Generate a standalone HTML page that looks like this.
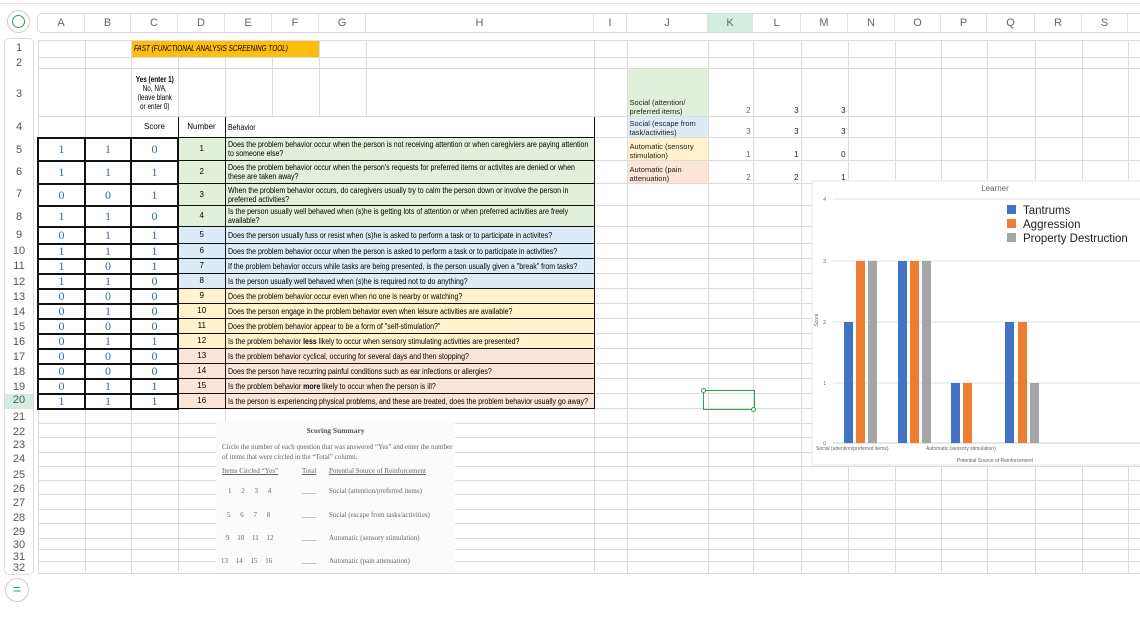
<!DOCTYPE html>
<html><head><meta charset="utf-8"><style>
*{margin:0;padding:0;box-sizing:border-box}
body{width:1140px;height:637px;background:#fff;position:relative;overflow:hidden;font-family:"Liberation Sans",sans-serif}
.abs{position:absolute}
#hdr{left:37px;top:13px;width:1103px;height:20px;border:1px solid #d8d8d8;border-right:none;border-radius:5px 0 0 5px;background:#fff}
.ch{position:absolute;top:0;height:18px;line-height:18px;text-align:center;color:#666;font-size:11px;border-right:1px solid #e0e0e0}
#rh{left:4px;top:38px;width:30px;height:537px;border:1px solid #ddd;border-radius:5px}
.rn{position:absolute;left:0;width:28px;text-align:center;color:#555;font-size:11px}
table{position:absolute;left:37px;top:40px;width:1103px;border-collapse:collapse;table-layout:fixed}
td{border:1px solid #dcdcdc;padding:0 2px;font-size:8px;line-height:10px;overflow:hidden;white-space:nowrap}
.n{font-family:"Liberation Serif",serif;color:#3a66a8;font-size:12px;line-height:12px;text-align:center;border:2px solid #111}
.d{text-align:center;border:1.5px solid #111;font-size:8px}
.b{border:1.5px solid #111;font-size:8px;line-height:9px}
.b>div{width:114%;transform:scaleX(0.875);transform-origin:left center;white-space:nowrap;overflow:hidden;max-height:18px}
.b.w>div{white-space:normal}
.g{background:#e2efda}.bl{background:#ddebf7}.y{background:#fff2cc}.p{background:#fce4d6}
.j{font-size:7.5px;line-height:9px;white-space:normal;vertical-align:bottom;color:#222}
.k{font-size:8px;text-align:right;vertical-align:bottom;color:#222}
.sq{display:block;width:125%;transform:scaleX(0.8);transform-origin:left center}
</style></head><body>
<div class="abs" style="left:0;top:3px;width:1140px;height:1px;background:#e4e4e4"></div>
<div class="abs" style="left:7px;top:10px;width:23px;height:23px;border:1px solid #ccc;border-radius:50%;"></div>
<div class="abs" style="left:12px;top:15px;width:13px;height:13px;border:1.5px solid #2fa05a;border-radius:50%;"></div>
<div id="hdr" class="abs">
<div class="ch" style="left:0;width:47px">A</div><div class="ch" style="left:47px;width:46px">B</div><div class="ch" style="left:93px;width:47px">C</div><div class="ch" style="left:140px;width:47px">D</div><div class="ch" style="left:187px;width:47px">E</div><div class="ch" style="left:234px;width:47px">F</div><div class="ch" style="left:281px;width:47px">G</div><div class="ch" style="left:328px;width:228px">H</div><div class="ch" style="left:556px;width:33px">I</div><div class="ch" style="left:589px;width:81px">J</div><div class="ch" style="left:670px;width:45px;background:#d3ede0">K</div><div class="ch" style="left:715px;width:48px">L</div><div class="ch" style="left:763px;width:47px">M</div><div class="ch" style="left:810px;width:47px">N</div><div class="ch" style="left:857px;width:46px">O</div><div class="ch" style="left:903px;width:46px">P</div><div class="ch" style="left:949px;width:48px">Q</div><div class="ch" style="left:997px;width:47px">R</div><div class="ch" style="left:1044px;width:46px">S</div>
</div>
<div id="rh" class="abs">
<div class="rn" style="top:3px">1</div><div class="rn" style="top:18px">2</div><div class="rn" style="top:49px">3</div><div class="rn" style="top:82px">4</div><div class="rn" style="top:105px">5</div><div class="rn" style="top:127px">6</div><div class="rn" style="top:149px">7</div><div class="rn" style="top:172px">8</div><div class="rn" style="top:190px">9</div><div class="rn" style="top:206px">10</div><div class="rn" style="top:221px">11</div><div class="rn" style="top:237px">12</div><div class="rn" style="top:252px">13</div><div class="rn" style="top:267px">14</div><div class="rn" style="top:282px">15</div><div class="rn" style="top:297px">16</div><div class="rn" style="top:312px">17</div><div class="rn" style="top:327px">18</div><div class="rn" style="top:342px">19</div><div class="rn" style="top:355px;background:#d3ede0;height:15px">20</div><div class="rn" style="top:372px">21</div><div class="rn" style="top:387px">22</div><div class="rn" style="top:400px">23</div><div class="rn" style="top:414px">24</div><div class="rn" style="top:430px">25</div><div class="rn" style="top:444px">26</div><div class="rn" style="top:458px">27</div><div class="rn" style="top:473px">28</div><div class="rn" style="top:487px">29</div><div class="rn" style="top:500px">30</div><div class="rn" style="top:512px">31</div><div class="rn" style="top:523px">32</div>
</div>
<div class="abs" style="left:5px;top:578px;width:24px;height:24px;border:1px solid #ccc;border-radius:50%;color:#2fa05a;font-size:14px;text-align:center;line-height:21px">=</div>

<table>
<colgroup><col style="width:47px"><col style="width:46px"><col style="width:47px"><col style="width:47px"><col style="width:47px"><col style="width:47px"><col style="width:47px"><col style="width:228px"><col style="width:33px"><col style="width:81px"><col style="width:45px"><col style="width:48px"><col style="width:47px"><col style="width:47px"><col style="width:46px"><col style="width:46px"><col style="width:48px"><col style="width:47px"><col style="width:46px"><col style="width:13px"></colgroup>
<tr style="height:17px"><td></td><td></td><td colspan="4" style="background:#fbbd0e;font-style:italic;font-size:8px"><span class="sq">FAST (FUNCTIONAL ANALYSIS SCREENING TOOL)</span></td><td></td><td></td><td></td><td></td><td></td><td></td><td></td><td></td><td></td><td></td><td></td><td></td><td></td><td></td></tr>
<tr style="height:11px"><td></td><td></td><td></td><td></td><td></td><td></td><td></td><td></td><td></td><td></td><td></td><td></td><td></td><td></td><td></td><td></td><td></td><td></td><td></td><td></td></tr>
<tr style="height:48px"><td></td><td></td><td style="text-align:center;font-size:8px;line-height:9px;padding:0"><div style="width:125%;margin-left:-12%;transform:scaleX(0.8)"><b>Yes (enter 1)</b><br>No, N/A,<br>(leave blank<br>or enter 0)</div></td><td></td><td></td><td></td><td></td><td></td><td></td><td class="j g">Social (attention/ preferred items)</td><td class="k" style="color:#666">2</td><td class="k">3</td><td class="k">3</td><td></td><td></td><td></td><td></td><td></td><td></td><td></td></tr>
<tr style="height:21px"><td></td><td></td><td class="d">Score</td><td class="d">Number</td><td class="b" colspan="4"><div>Behavior</div></td><td></td><td class="j bl">Social (escape from task/activities)</td><td class="k" style="color:#666">3</td><td class="k">3</td><td class="k">3</td><td></td><td></td><td></td><td></td><td></td><td></td><td></td></tr>
<tr style="height:23px"><td class="n">1</td><td class="n">1</td><td class="n">0</td><td class="d g">1</td><td class="b w g" colspan="4"><div>Does the problem behavior occur when the person is not receiving attention or when caregiviers are paying attention to someone else?</div></td><td></td><td class="j y">Automatic (sensory stimulation)</td><td class="k" style="color:#666">1</td><td class="k">1</td><td class="k">0</td><td></td><td></td><td></td><td></td><td></td><td></td><td></td></tr>
<tr style="height:23px"><td class="n">1</td><td class="n">1</td><td class="n">1</td><td class="d g">2</td><td class="b w g" colspan="4"><div>Does the problem behavior occur when the person's requests for preferred items or activites are denied or when these are taken away?</div></td><td></td><td class="j p">Automatic (pain attenuation)</td><td class="k" style="color:#666">2</td><td class="k">2</td><td class="k">1</td><td></td><td></td><td></td><td></td><td></td><td></td><td></td></tr>
<tr style="height:22px"><td class="n">0</td><td class="n">0</td><td class="n">1</td><td class="d g">3</td><td class="b w g" colspan="4"><div>When the problem behavior occurs, do caregivers usually try to calm the person down or involve the person in preferred activities?</div></td><td></td><td></td><td></td><td></td><td></td><td></td><td></td><td></td><td></td><td></td><td></td><td></td></tr>
<tr style="height:21px"><td class="n">1</td><td class="n">1</td><td class="n">0</td><td class="d g">4</td><td class="b w g" colspan="4"><div>Is the person usually well behaved when (s)he is getting lots of attention or when preferred activities are freely available?</div></td><td></td><td></td><td></td><td></td><td></td><td></td><td></td><td></td><td></td><td></td><td></td><td></td></tr>
<tr style="height:17px"><td class="n">0</td><td class="n">1</td><td class="n">1</td><td class="d bl">5</td><td class="b bl" colspan="4"><div>Does the person usually fuss or resist when (s)he is asked to perform a task or to participate in activites?</div></td><td></td><td></td><td></td><td></td><td></td><td></td><td></td><td></td><td></td><td></td><td></td><td></td></tr>
<tr style="height:15px"><td class="n">1</td><td class="n">1</td><td class="n">1</td><td class="d bl">6</td><td class="b bl" colspan="4"><div>Does the problem behavior occur when the person is asked to perform a task or to participate in activities?</div></td><td></td><td></td><td></td><td></td><td></td><td></td><td></td><td></td><td></td><td></td><td></td><td></td></tr>
<tr style="height:15px"><td class="n">1</td><td class="n">0</td><td class="n">1</td><td class="d bl">7</td><td class="b bl" colspan="4"><div>If the problem behavior occurs while tasks are being presented, is the person usually given a "break" from tasks?</div></td><td></td><td></td><td></td><td></td><td></td><td></td><td></td><td></td><td></td><td></td><td></td><td></td></tr>
<tr style="height:15px"><td class="n">1</td><td class="n">1</td><td class="n">0</td><td class="d bl">8</td><td class="b bl" colspan="4"><div>Is the person usually well behaved when (s)he is required not to do anything?</div></td><td></td><td></td><td></td><td></td><td></td><td></td><td></td><td></td><td></td><td></td><td></td><td></td></tr>
<tr style="height:15px"><td class="n">0</td><td class="n">0</td><td class="n">0</td><td class="d y">9</td><td class="b y" colspan="4"><div>Does the problem behavior occur even when no one is nearby or watching?</div></td><td></td><td></td><td></td><td></td><td></td><td></td><td></td><td></td><td></td><td></td><td></td><td></td></tr>
<tr style="height:15px"><td class="n">0</td><td class="n">1</td><td class="n">0</td><td class="d y">10</td><td class="b y" colspan="4"><div>Does the person engage in the problem behavior even when leisure activities are available?</div></td><td></td><td></td><td></td><td></td><td></td><td></td><td></td><td></td><td></td><td></td><td></td><td></td></tr>
<tr style="height:15px"><td class="n">0</td><td class="n">0</td><td class="n">0</td><td class="d y">11</td><td class="b y" colspan="4"><div>Does the problem behavior appear to be a form of "self-stimulation?"</div></td><td></td><td></td><td></td><td></td><td></td><td></td><td></td><td></td><td></td><td></td><td></td><td></td></tr>
<tr style="height:15px"><td class="n">0</td><td class="n">1</td><td class="n">1</td><td class="d y">12</td><td class="b y" colspan="4"><div>Is the problem behavior <b>less</b> likely to occur when sensory stimulating activities are presented?</div></td><td></td><td></td><td></td><td></td><td></td><td></td><td></td><td></td><td></td><td></td><td></td><td></td></tr>
<tr style="height:15px"><td class="n">0</td><td class="n">0</td><td class="n">0</td><td class="d p">13</td><td class="b p" colspan="4"><div>Is the problem behavior cyclical, occuring for several days and then stopping?</div></td><td></td><td></td><td></td><td></td><td></td><td></td><td></td><td></td><td></td><td></td><td></td><td></td></tr>
<tr style="height:15px"><td class="n">0</td><td class="n">0</td><td class="n">0</td><td class="d p">14</td><td class="b p" colspan="4"><div>Does the person have recurring painful conditions such as ear infections or allergies?</div></td><td></td><td></td><td></td><td></td><td></td><td></td><td></td><td></td><td></td><td></td><td></td><td></td></tr>
<tr style="height:15px"><td class="n">0</td><td class="n">1</td><td class="n">1</td><td class="d p">15</td><td class="b p" colspan="4"><div>Is the problem behavior <b>more</b> likely to occur when the person is ill?</div></td><td></td><td></td><td></td><td></td><td></td><td></td><td></td><td></td><td></td><td></td><td></td><td></td></tr>
<tr style="height:15px"><td class="n">1</td><td class="n">1</td><td class="n">1</td><td class="d p">16</td><td class="b p" colspan="4"><div>Is the person is experiencing physical problems, and these are treated, does the problem behavior usually go away?</div></td><td></td><td></td><td></td><td></td><td></td><td></td><td></td><td></td><td></td><td></td><td></td><td></td></tr>
<tr style="height:15px"><td></td><td></td><td></td><td></td><td colspan="4"></td><td></td><td></td><td></td><td></td><td></td><td></td><td></td><td></td><td></td><td></td><td></td><td></td></tr>
<tr style="height:14px"><td></td><td></td><td></td><td></td><td colspan="4"></td><td></td><td></td><td></td><td></td><td></td><td></td><td></td><td></td><td></td><td></td><td></td><td></td></tr>
<tr style="height:15px"><td></td><td></td><td></td><td></td><td colspan="4"></td><td></td><td></td><td></td><td></td><td></td><td></td><td></td><td></td><td></td><td></td><td></td><td></td></tr>
<tr style="height:14px"><td></td><td></td><td></td><td></td><td colspan="4"></td><td></td><td></td><td></td><td></td><td></td><td></td><td></td><td></td><td></td><td></td><td></td><td></td></tr>
<tr style="height:14px"><td></td><td></td><td></td><td></td><td colspan="4"></td><td></td><td></td><td></td><td></td><td></td><td></td><td></td><td></td><td></td><td></td><td></td><td></td></tr>
<tr style="height:14px"><td></td><td></td><td></td><td></td><td colspan="4"></td><td></td><td></td><td></td><td></td><td></td><td></td><td></td><td></td><td></td><td></td><td></td><td></td></tr>
<tr style="height:15px"><td></td><td></td><td></td><td></td><td colspan="4"></td><td></td><td></td><td></td><td></td><td></td><td></td><td></td><td></td><td></td><td></td><td></td><td></td></tr>
<tr style="height:14px"><td></td><td></td><td></td><td></td><td colspan="4"></td><td></td><td></td><td></td><td></td><td></td><td></td><td></td><td></td><td></td><td></td><td></td><td></td></tr>
<tr style="height:15px"><td></td><td></td><td></td><td></td><td colspan="4"></td><td></td><td></td><td></td><td></td><td></td><td></td><td></td><td></td><td></td><td></td><td></td><td></td></tr>
<tr style="height:11px"><td></td><td></td><td></td><td></td><td colspan="4"></td><td></td><td></td><td></td><td></td><td></td><td></td><td></td><td></td><td></td><td></td><td></td><td></td></tr>
<tr style="height:12px"><td></td><td></td><td></td><td></td><td colspan="4"></td><td></td><td></td><td></td><td></td><td></td><td></td><td></td><td></td><td></td><td></td><td></td><td></td></tr>
<tr style="height:12px"><td></td><td></td><td></td><td></td><td colspan="4"></td><td></td><td></td><td></td><td></td><td></td><td></td><td></td><td></td><td></td><td></td><td></td><td></td></tr>
</table>
<div class="abs" style="left:703px;top:390px;width:52px;height:20px;border:1.5px solid #2fa05a"></div>
<div class="abs" style="left:701px;top:388px;width:5px;height:5px;border:1px solid #2fa05a;border-radius:50%;background:#fff"></div>
<div class="abs" style="left:751px;top:407px;width:5px;height:5px;border:1px solid #2fa05a;border-radius:50%;background:#fff"></div>

<!-- scoring summary -->
<div class="abs" style="left:216px;top:421px;width:239px;height:152px;background:#fbfbfb;font-family:'Liberation Serif',serif;color:#666;font-size:7px">
<div class="abs" style="left:0;top:5px;width:239px;text-align:center;font-weight:bold;color:#555;font-size:7.5px">Scoring Summary</div>
<div class="abs" style="left:6px;top:21px;width:232px;line-height:10px">Circle the number of each question that was answered “Yes” and enter the number of items that were circled in the “Total” column.</div>
<div class="abs" style="left:6px;top:46px;text-decoration:underline">Items Circled “Yes”</div>
<div class="abs" style="left:86px;top:46px;text-decoration:underline">Total</div>
<div class="abs" style="left:113px;top:46px;text-decoration:underline">Potential Source of Reinforcement</div>
<div class="abs" style="left:12px;top:66px;word-spacing:8px">1 2 3 4</div><div class="abs" style="left:86px;top:66px">____</div><div class="abs" style="left:113px;top:66px">Social (attention/preferred items)</div>
<div class="abs" style="left:11px;top:90px;word-spacing:8px">5 6 7 8</div><div class="abs" style="left:86px;top:90px">____</div><div class="abs" style="left:113px;top:90px">Social (escape from tasks/activities)</div>
<div class="abs" style="left:10px;top:113px;word-spacing:6px">9 10 11 12</div><div class="abs" style="left:86px;top:113px">____</div><div class="abs" style="left:113px;top:113px">Automatic (sensory stimulation)</div>
<div class="abs" style="left:5px;top:136px;word-spacing:6px">13 14 15 16</div><div class="abs" style="left:86px;top:136px">____</div><div class="abs" style="left:113px;top:136px">Automatic (pain attenuation)</div>
</div>

<!-- chart -->
<svg class="abs" style="left:810px;top:180px" width="330" height="286" viewBox="810 180 330 286">
<rect x="812" y="181" width="330" height="284" fill="#fff" stroke="#e4e4e4"/>
<text x="995" y="191" font-size="8" fill="#666" text-anchor="middle" font-family="Liberation Sans">Learner</text>
<g stroke="#e2e2e2" stroke-width="1">
<line x1="833" y1="199" x2="1140" y2="199"/><line x1="833" y1="261" x2="1140" y2="261"/><line x1="833" y1="322" x2="1140" y2="322"/><line x1="833" y1="383" x2="1140" y2="383"/><line x1="833" y1="443" x2="1140" y2="443" stroke="#ccc"/></g>
<g font-size="5" fill="#666" font-family="Liberation Sans" text-anchor="end">
<text x="826" y="201">4</text><text x="826" y="263">3</text><text x="826" y="324">2</text><text x="826" y="385">1</text><text x="826" y="445">0</text></g>
<text transform="translate(818,320) rotate(-90)" font-size="5" fill="#666" text-anchor="middle" font-family="Liberation Sans">Score</text>
<g>
<rect x="844" y="322" width="9" height="121" fill="#4472c4"/><rect x="856" y="261" width="9" height="182" fill="#ed7d31"/><rect x="868" y="261" width="9" height="182" fill="#a5a5a5"/>
<rect x="898" y="261" width="9" height="182" fill="#4472c4"/><rect x="910" y="261" width="9" height="182" fill="#ed7d31"/><rect x="922" y="261" width="9" height="182" fill="#a5a5a5"/>
<rect x="951" y="383" width="9" height="60" fill="#4472c4"/><rect x="963" y="383" width="9" height="60" fill="#ed7d31"/>
<rect x="1005" y="322" width="9" height="121" fill="#4472c4"/><rect x="1018" y="322" width="9" height="121" fill="#ed7d31"/><rect x="1030" y="383" width="9" height="60" fill="#a5a5a5"/>
</g>
<g font-size="5" fill="#666" font-family="Liberation Sans">
<text x="816" y="450">Social (attention/preferred items)</text><text x="926" y="450">Automatic (sensory stimulation)</text>
<text x="995" y="462" text-anchor="middle">Potential Source of Reinforcement</text></g>
<rect x="1007" y="205" width="9" height="9" fill="#4472c4"/><rect x="1007" y="219" width="9" height="9" fill="#ed7d31"/><rect x="1007" y="233" width="9" height="9" fill="#a5a5a5"/>
<g font-size="11.5" fill="#222" font-family="Liberation Sans">
<text x="1023" y="214">Tantrums</text><text x="1023" y="228">Aggression</text><text x="1023" y="242">Property Destruction</text></g>
</svg>
</body></html>
